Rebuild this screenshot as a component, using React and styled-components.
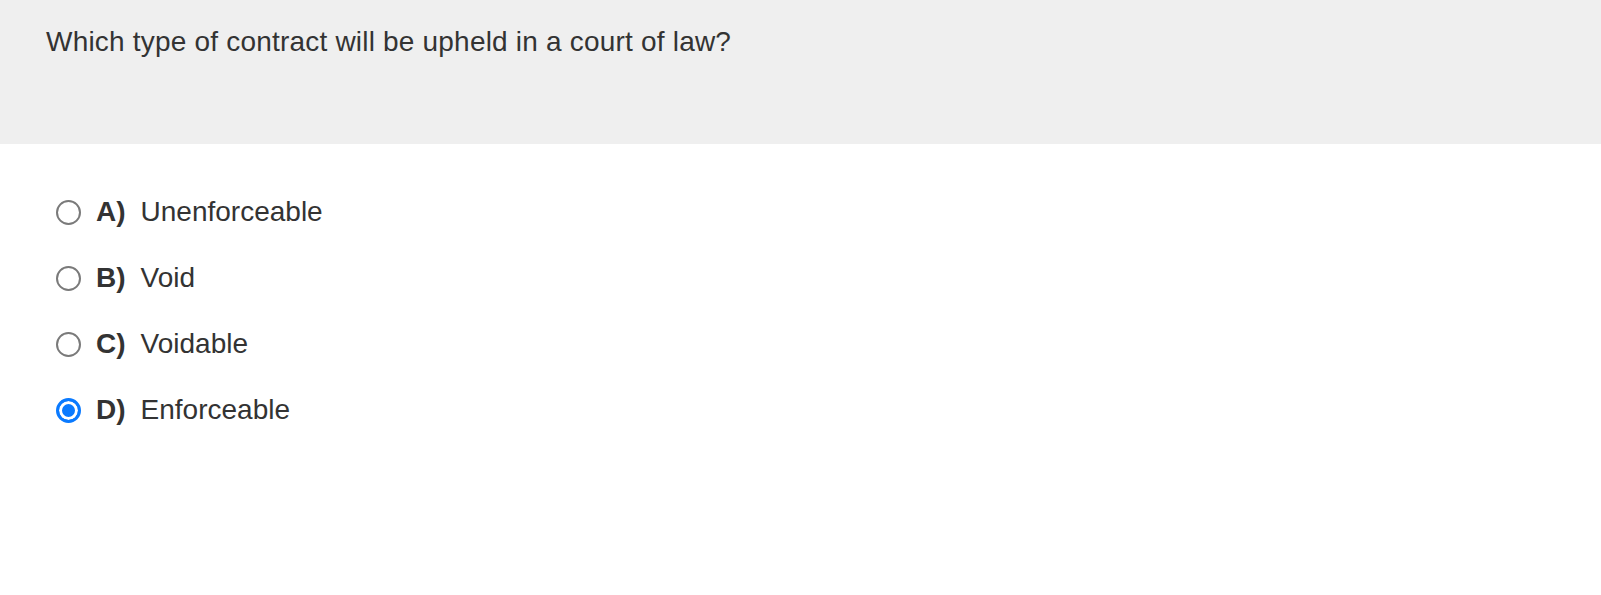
import React, { useState } from "react";
import styled, { createGlobalStyle } from "styled-components";

const GlobalStyle = createGlobalStyle`
  html, body {
    margin: 0;
    padding: 0;
    background: #ffffff;
  }
  body {
    font-family: "Liberation Sans", Arial, Helvetica, sans-serif;
    color: #333333;
  }
`;

const Page = styled.div`
  width: 100%;
  min-height: 595px;
  background: #ffffff;
`;

const QuestionBar = styled.div`
  background: #efefef;
  height: 144px;
  box-sizing: border-box;
  padding: 25px 0 0 46px;
`;

const QuestionText = styled.h2`
  margin: 0;
  font-size: 28px;
  font-weight: 400;
  line-height: 34px;
  letter-spacing: 0.2px;
  color: #333333;
`;

const OptionList = styled.div`
  display: flex;
  flex-direction: column;
  padding: 35px 0 0 56px;
`;

const OptionRow = styled.label`
  display: flex;
  align-items: center;
  height: 66px;
  cursor: pointer;
  font-size: 28px;
  color: #333333;
`;

const Radio = styled.span`
  box-sizing: border-box;
  width: 25px;
  height: 25px;
  border-radius: 50%;
  flex-shrink: 0;
  margin-right: 15px;
  border: ${(p) => (p.checked ? "3px solid #0a7aff" : "2px solid #7a7a7a")};
  background: ${(p) => (p.checked ? "#0a7aff" : "#ffffff")};
  box-shadow: ${(p) => (p.checked ? "inset 0 0 0 3px #ffffff" : "none")};
`;

const Letter = styled.span`
  font-weight: 700;
  margin-right: 15px;
`;

const options = [
  { key: "A", text: "Unenforceable" },
  { key: "B", text: "Void" },
  { key: "C", text: "Voidable" },
  { key: "D", text: "Enforceable" },
];

const App = () => {
  const [selected, setSelected] = useState("D");

  return (
    <Page>
      <GlobalStyle />
      <QuestionBar>
        <QuestionText>Which type of contract will be upheld in a court of law?</QuestionText>
      </QuestionBar>
      <OptionList>
        {options.map((o) => (
          <OptionRow key={o.key} onClick={() => setSelected(o.key)}>
            <Radio checked={selected === o.key} />
            <Letter>{o.key})</Letter>
            <span>{o.text}</span>
          </OptionRow>
        ))}
      </OptionList>
    </Page>
  );
};

export default App;
